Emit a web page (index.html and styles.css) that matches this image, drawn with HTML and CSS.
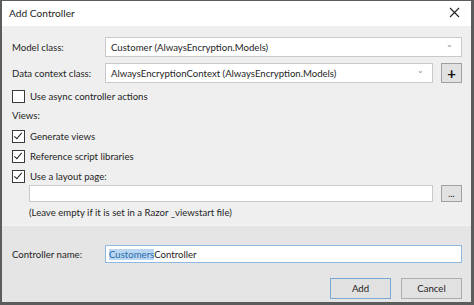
FILE: index.html
```html
<!DOCTYPE html>
<html lang="en">
<head>
    <meta charset="UTF-8">
    <title>Add Controller</title>
    <link rel="stylesheet" href="styles.css">
</head>
<body>
    <div class="window">
        <div class="titlebar">
            <span class="title">Add Controller</span>
            <svg class="close" width="11" height="11" viewBox="0 0 11 11">
                <path d="M1 1 L10 10 M10 1 L1 10" stroke="#222" stroke-width="1.1" fill="none"/>
            </svg>
        </div>
        <div class="content">
            <div class="row first">
                <label class="label">Model class:</label>
                <div class="select">
                    <span>Customer (AlwaysEncryption.Models)</span>
                    <span class="chev">&#8964;</span>
                </div>
            </div>
            <div class="row">
                <label class="label">Data context class:</label>
                <div class="select">
                    <span>AlwaysEncryptionContext (AlwaysEncryption.Models)</span>
                    <span class="chev">&#8964;</span>
                </div>
                <button class="small-btn plus">+</button>
            </div>
            <div class="check-row async">
                <span class="box"></span>
                <span>Use async controller actions</span>
            </div>
            <div class="section">Views:</div>
            <div class="check-row">
                <span class="box checked"></span>
                <span>Generate views</span>
            </div>
            <div class="check-row">
                <span class="box checked"></span>
                <span>Reference script libraries</span>
            </div>
            <div class="check-row">
                <span class="box checked"></span>
                <span>Use a layout page:</span>
            </div>
            <div class="layout-row">
                <div class="textbox"></div>
                <button class="small-btn dots">...</button>
            </div>
            <div class="hint">(Leave empty if it is set in a Razor _viewstart file)</div>
        </div>
        <div class="footer">
            <div class="row">
                <label class="label">Controller name:</label>
                <div class="textbox focus"><span class="sel">Customers</span>Controller</div>
            </div>
            <div class="buttons">
                <button class="btn default">Add</button>
                <button class="btn">Cancel</button>
            </div>
        </div>
    </div>
</body>
</html>
```

FILE: styles.css
```css
body {
    margin: 0;
    background: #5c5c5c;
    font-family: Lato, 'Noto Sans', sans-serif;
    font-size: 9.6px;
    color: #1e1e1e;
}
.window {
    width: 474px;
    height: 305px;
    box-sizing: border-box;
    border-style: solid;
    border-color: #5c5c5c;
    border-width: 1px 3px 3px 2px;
    display: flex;
    flex-direction: column;
}
.titlebar {
    height: 25px;
    background: #fff;
    display: flex;
    align-items: center;
    justify-content: space-between;
    padding: 0 11px 0 7px;
}
.title {
    font-size: 10.2px;
    margin-top: -2px;
}
.close {
    margin-top: -2px;
}
.content {
    background: #efefef;
    padding: 0 9px 0 10px;
    height: 199px;
    box-sizing: border-box;
}
.row {
    display: flex;
    align-items: center;
    margin-top: 6px;
}
.row.first {
    margin-top: 11px;
}
.label {
    width: 93px;
    flex: none;
}
.select {
    flex: 1;
    height: 20px;
    box-sizing: border-box;
    background: #fff;
    border: 1px solid #c9c9c9;
    display: flex;
    align-items: center;
    justify-content: space-between;
    padding: 0 8px 0 5px;
}
.chev {
    color: #8a8a8a;
    font-size: 8px;
    line-height: 1;
    margin-top: -6px;
}
.small-btn {
    flex: none;
    width: 21px;
    height: 20px;
    margin-left: 8px;
    background: #e1e1e1;
    border: 1px solid #a0a0a0;
    padding: 0;
    font-family: inherit;
    color: #111;
}
.plus {
    font-size: 15px;
    font-weight: bold;
    line-height: 16px;
}
.dots {
    height: 17px;
    font-size: 9px;
    line-height: 12px;
}
.check-row {
    display: flex;
    align-items: center;
    height: 20px;
}
.check-row.async {
    margin-top: 3px;
}
.box {
    width: 11px;
    height: 11px;
    border: 1px solid #3a3a3a;
    background: #fff;
    margin-right: 5px;
    position: relative;
}
.box.checked::after {
    content: "";
    position: absolute;
    left: 3px;
    top: 0px;
    width: 3px;
    height: 7px;
    border: solid #1e1e1e;
    border-width: 0 1.5px 1.5px 0;
    transform: rotate(40deg);
}
.section {
    height: 20px;
    line-height: 20px;
}
.layout-row {
    display: flex;
    align-items: center;
    padding-left: 17px;
    margin-top: -1px;
}
.textbox {
    flex: 1;
    height: 17px;
    box-sizing: border-box;
    background: #fff;
    border: 1px solid #c9c9c9;
    display: flex;
    align-items: center;
    padding-left: 3px;
}
.hint {
    padding-left: 17px;
    margin-top: 5px;
}
.footer {
    flex: 1;
    background: #e5e5e5;
    border-top: 1px solid #f4f4f4;
    padding: 0 9px 0 10px;
}
.footer .row {
    margin-top: 19px;
}
.textbox.focus {
    height: 18px;
    border-color: #8fb9e3;
}
.sel {
    background: #b9d7f2;
    color: #2a6aa8;
}
.buttons {
    display: flex;
    justify-content: flex-end;
    gap: 10px;
    margin-top: 15px;
}
.btn {
    width: 61px;
    height: 21px;
    background: #e1e1e1;
    border: 1px solid #adadad;
    font-family: inherit;
    font-size: 9.6px;
    color: #1e1e1e;
    padding: 0;
}
.btn.default {
    border-color: #7aa7d4;
}
```
